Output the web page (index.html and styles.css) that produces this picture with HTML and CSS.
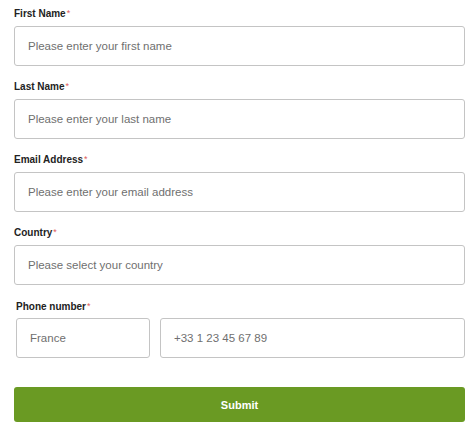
FILE: index.html
```html
<!DOCTYPE html>
<html lang="en">
<head>
<meta charset="utf-8">
<title>Form</title>
<link rel="stylesheet" href="styles.css">
</head>
<body>
<form class="form">
  <div class="field">
    <label class="label">First Name<span class="req">*</span></label>
    <input class="input" type="text" placeholder="Please enter your first name">
  </div>
  <div class="field">
    <label class="label">Last Name<span class="req">*</span></label>
    <input class="input" type="text" placeholder="Please enter your last name">
  </div>
  <div class="field">
    <label class="label">Email Address<span class="req">*</span></label>
    <input class="input" type="text" placeholder="Please enter your email address">
  </div>
  <div class="field">
    <label class="label">Country<span class="req">*</span></label>
    <input class="input" type="text" placeholder="Please select your country">
  </div>
  <div class="field phone-field">
    <label class="label">Phone number<span class="req">*</span></label>
    <div class="phone-row">
      <input class="input country-code" type="text" placeholder="France">
      <input class="input phone" type="text" placeholder="+33 1 23 45 67 89">
    </div>
  </div>
  <button class="submit" type="button">Submit</button>
</form>
</body>
</html>
```
FILE: styles.css
```css
* { box-sizing: border-box; }
html, body { margin: 0; padding: 0; background: #ffffff; }
body {
  font-family: "Liberation Sans", Arial, sans-serif;
  padding: 8px 9px 0 14px;
}
.form {
  width: 451px;
  display: flex;
  flex-direction: column;
}
.field {
  display: flex;
  flex-direction: column;
  margin-bottom: 15px;
}
.label {
  font-size: 10px;
  line-height: 12px;
  font-weight: bold;
  color: #222222;
  margin-bottom: 6px;
}
.req {
  color: #e05a5a;
  font-size: 9px;
  font-weight: normal;
  vertical-align: top;
  line-height: 10px;
  margin-left: 1px;
}
.input {
  display: block;
  width: 100%;
  height: 40px;
  border: 1px solid #c4c4c4;
  border-radius: 3px;
  padding: 0 13px;
  font-family: "Liberation Sans", Arial, sans-serif;
  font-size: 11.5px;
  color: #333333;
  background: #ffffff;
  outline: none;
}
.input::placeholder { color: #6f6f6f; opacity: 1; }
.phone-field {
  margin-left: 2px;
  margin-top: 1px;
  margin-bottom: 29px;
}
.phone-field .label { margin-bottom: 5px; }
.phone-row {
  display: flex;
  gap: 10px;
}
.country-code { width: 134px; flex: none; }
.phone { flex: 1; }
.submit {
  height: 35px;
  width: 100%;
  border: none;
  border-radius: 3px;
  background: #6a9a23;
  color: #ffffff;
  font-family: "Liberation Sans", Arial, sans-serif;
  font-size: 11px;
  font-weight: bold;
  cursor: pointer;
}
```
